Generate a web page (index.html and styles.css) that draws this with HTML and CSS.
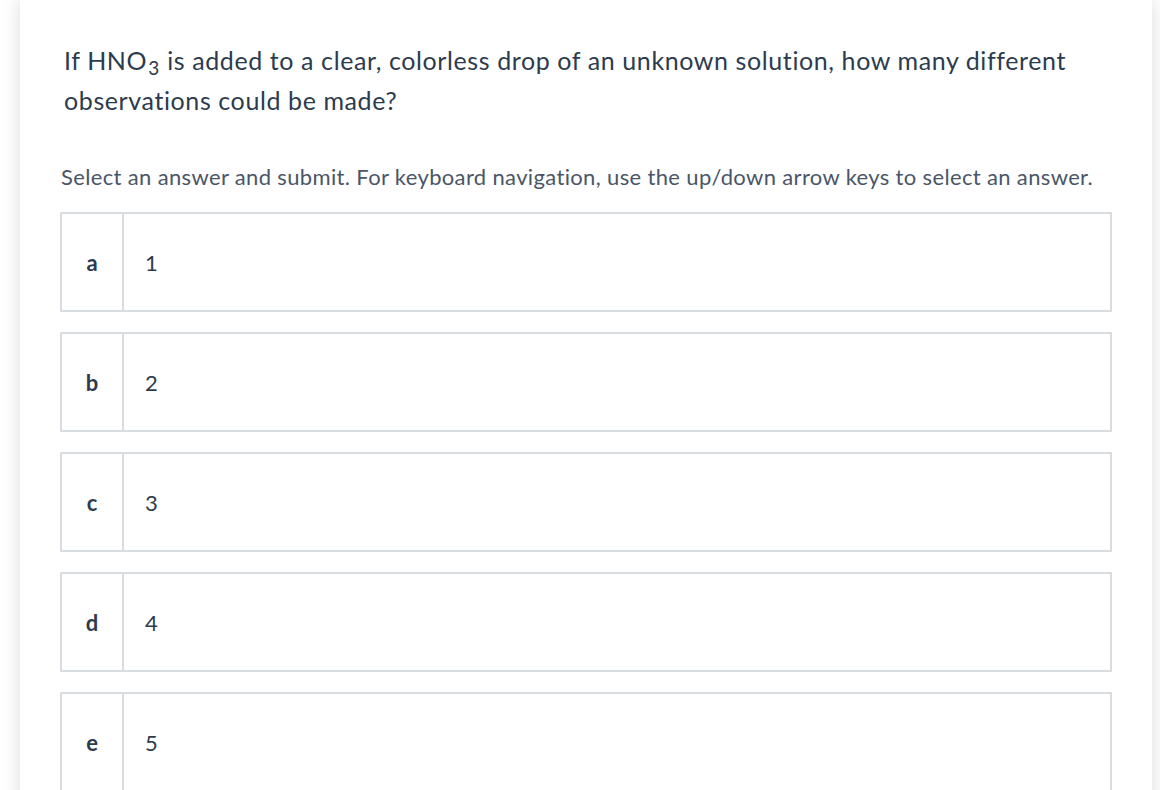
FILE: index.html
```html
<!DOCTYPE html>
<html lang="en">
<head>
    <meta charset="UTF-8">
    <meta name="viewport" content="width=device-width, initial-scale=1.0">
    <title>Question</title>
    <link rel="stylesheet" href="styles.css">
</head>
<body>
    <div class="card">
        <p class="question">If HNO<sub>3</sub> is added to a clear, colorless drop of an unknown solution, how many different observations could be made?</p>
        <p class="instructions">Select an answer and submit. For keyboard navigation, use the up/down arrow keys to select an answer.</p>

        <div class="choices">
            <div class="choice">
                <div class="choice-letter">a</div>
                <div class="choice-text">1</div>
            </div>
            <div class="choice">
                <div class="choice-letter">b</div>
                <div class="choice-text">2</div>
            </div>
            <div class="choice">
                <div class="choice-letter">c</div>
                <div class="choice-text">3</div>
            </div>
            <div class="choice">
                <div class="choice-letter">d</div>
                <div class="choice-text">4</div>
            </div>
            <div class="choice">
                <div class="choice-letter">e</div>
                <div class="choice-text">5</div>
            </div>
        </div>
    </div>
</body>
</html>
```

FILE: styles.css
```css
body {
    margin: 0;
    background: #ffffff;
    font-family: Lato, "Open Sans", Arial, sans-serif;
    color: #2d3b4e;
    overflow: hidden;
}
.card {
    margin-left: 20px;
    width: 1132px;
    height: 900px;
    background: white;
    box-shadow: 0 0 18px rgba(0, 0, 0, 0.14);
    padding: 40px 40px 0 40px;
    box-sizing: border-box;
}
.question {
    margin: 0 0 0 4px;
    font-size: 25px;
    letter-spacing: 0.6px;
    line-height: 40px;
    color: #2d3b4e;
}
.question sub {
    display: inline-block;
    margin: 0 1px;
    font-size: 19px;
    line-height: 1;
    vertical-align: -5px;
    letter-spacing: 0;
}
.instructions {
    margin: 42px 0 0 1px;
    font-size: 22px;
    letter-spacing: 0.35px;
    line-height: 30px;
    color: #4a5668;
}
.choices {
    margin-top: 20px;
    display: flex;
    flex-direction: column;
    gap: 20px;
}
.choice {
    display: flex;
    height: 100px;
    border: 2px solid #d9dce0;
    box-sizing: border-box;
}
.choice-letter {
    width: 60px;
    border-right: 2px solid #d9dce0;
    display: flex;
    align-items: center;
    justify-content: center;
    font-size: 22px;
    font-weight: bold;
}
.choice-text {
    display: flex;
    align-items: center;
    padding-left: 21px;
    font-size: 22px;
}
```
